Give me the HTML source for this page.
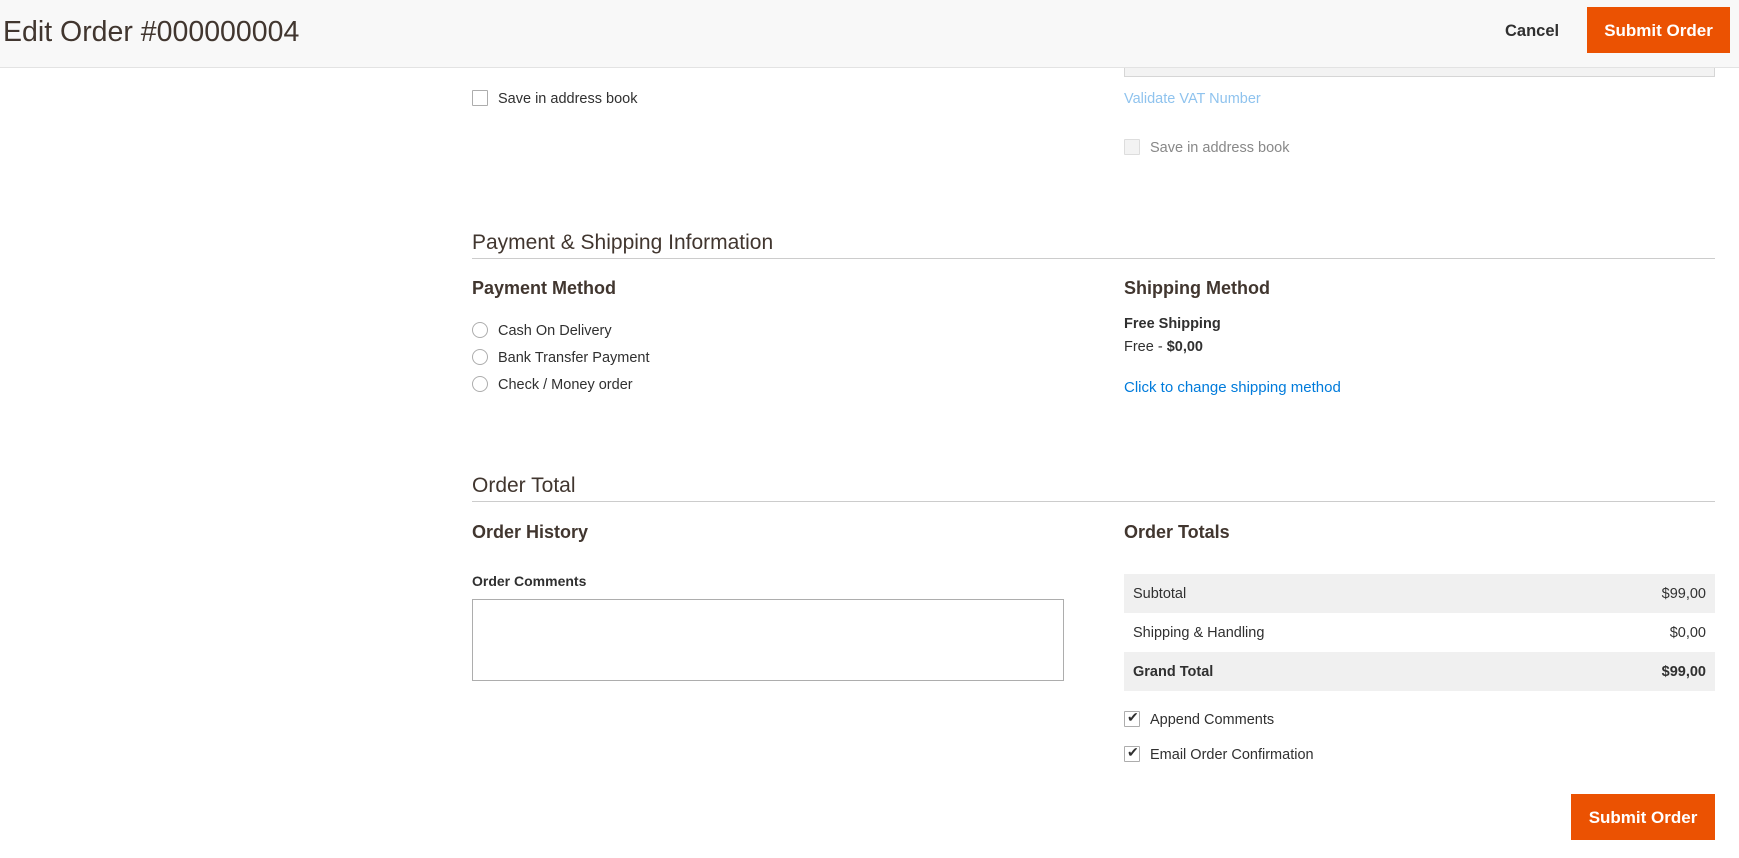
<!DOCTYPE html>
<html><head><meta charset="utf-8"><style>
*{margin:0;padding:0;box-sizing:border-box}
html,body{width:1739px;height:858px;overflow:hidden;background:#fff;font-family:"Liberation Sans",sans-serif;color:#303030}
.a{position:absolute;white-space:nowrap}
.hdr{position:absolute;left:0;top:0;width:1739px;height:68px;background:#f8f8f8;border-bottom:1px solid #e3e3e3}
.t{font-size:14.5px;line-height:20px}
.cb{position:absolute;width:16px;height:16px;border:1px solid #adadad;background:#fff;border-radius:1px}
.rd{position:absolute;width:16px;height:16px;border:1px solid #adadad;border-radius:50%;background:#fff}
.h2{font-size:21px;line-height:26px;color:#41362f}
.h3{font-size:18px;line-height:24px;font-weight:bold;color:#41362f}
.line{position:absolute;height:1px;background:#ccc}
.btn{position:absolute;background:#eb5202;color:#fff;font-size:17px;font-weight:bold;text-align:center}
.row{position:absolute;left:1124px;width:591px;height:39px;font-size:14.5px;line-height:41px;padding:0 9px}
.row span{float:right}
</style></head><body>
<div class="hdr"></div>
<div class="a" style="left:3px;top:15px;font-size:28.5px;line-height:34px;color:#41362f">Edit Order #000000004</div>
<div class="a" style="left:1505px;top:21px;font-size:16.5px;line-height:20px;font-weight:bold;color:#303030">Cancel</div>
<div class="btn" style="left:1587px;top:7px;width:143px;height:46px;line-height:47px">Submit Order</div>

<div class="a" style="left:1124px;top:68px;width:591px;height:9px;background:#f3f3f3;border:1px solid #d6d6d6;border-top:none"></div>
<div class="cb" style="left:472px;top:90px"></div>
<div class="a t" style="left:498px;top:89px">Save in address book</div>
<div class="a t" style="left:1124px;top:89px;color:#8fc3ee">Validate VAT Number</div>
<div class="cb" style="left:1124px;top:139px;background:#f3f3f3;border-color:#ddd"></div>
<div class="a t" style="left:1150px;top:138px;color:#888">Save in address book</div>

<div class="a h2" style="left:472px;top:230px">Payment &amp; Shipping Information</div>
<div class="line" style="left:472px;top:258px;width:1243px"></div>
<div class="a h3" style="left:472px;top:276px">Payment Method</div>
<div class="rd" style="left:472px;top:322px"></div>
<div class="a t" style="left:498px;top:321px">Cash On Delivery</div>
<div class="rd" style="left:472px;top:349px"></div>
<div class="a t" style="left:498px;top:348px">Bank Transfer Payment</div>
<div class="rd" style="left:472px;top:376px"></div>
<div class="a t" style="left:498px;top:375px">Check / Money order</div>

<div class="a h3" style="left:1124px;top:276px">Shipping Method</div>
<div class="a t" style="left:1124px;top:314px;font-weight:bold">Free Shipping</div>
<div class="a t" style="left:1124px;top:337px">Free - <b>$0,00</b></div>
<div class="a" style="left:1124px;top:378px;font-size:15px;line-height:20px;color:#007bdb">Click to change shipping method</div>

<div class="a h2" style="left:472px;top:473px">Order Total</div>
<div class="line" style="left:472px;top:501px;width:1243px"></div>
<div class="a h3" style="left:472px;top:520px">Order History</div>
<div class="a h3" style="left:1124px;top:520px">Order Totals</div>
<div class="a t" style="left:472px;top:571px;font-weight:bold;font-size:14px">Order Comments</div>
<div class="a" style="left:472px;top:599px;width:592px;height:82px;border:1px solid #adadad"></div>

<div class="row" style="top:574px;background:#f0f0f0">Subtotal<span>$99,00</span></div>
<div class="row" style="top:613px">Shipping &amp; Handling<span>$0,00</span></div>
<div class="row" style="top:652px;background:#f0f0f0;font-weight:bold">Grand Total<span>$99,00</span></div>

<div class="cb" style="left:1124px;top:711px"></div>
<div class="a" style="left:1127px;top:709px;font-size:14px;color:#303030">&#10004;</div>
<div class="a t" style="left:1150px;top:710px">Append Comments</div>
<div class="cb" style="left:1124px;top:746px"></div>
<div class="a" style="left:1127px;top:744px;font-size:14px;color:#303030">&#10004;</div>
<div class="a t" style="left:1150px;top:745px">Email Order Confirmation</div>

<div class="btn" style="left:1571px;top:794px;width:144px;height:46px;line-height:47px">Submit Order</div>
</body></html>
